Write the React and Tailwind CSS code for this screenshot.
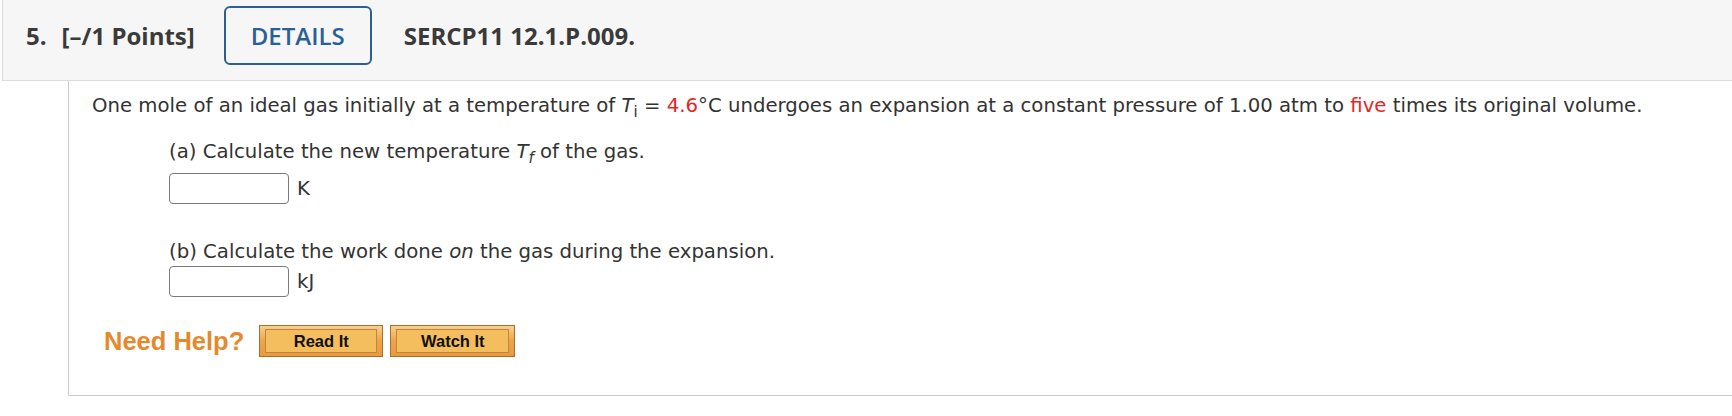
export default function App() {
  const body = { fontFamily: '"DejaVu Sans", Verdana, sans-serif' };

  const HelpButton = ({ label, width }) => (
    <div
      className={`h-[32px] ${width} border border-[#a96f30] bg-gradient-to-b from-[#f8cf8f] via-[#eda348] to-[#e99a3f] px-[5px] py-[3px]`}
    >
      <div className="flex h-full items-center justify-center border border-[#c4843a] bg-[#f4bd5e]">
        <span
          className="text-[16.5px] font-bold text-[#111]"
          style={{ fontFamily: '"Liberation Sans", Arial, sans-serif' }}
        >
          {label}
        </span>
      </div>
    </div>
  );

  return (
    <div className="h-[416px] w-full overflow-hidden bg-white">
      {/* question header */}
      <div
        className="ml-[2px] h-[81px] border-b border-l border-[#dcdcdc] bg-[#f6f6f6] pt-[6px] text-[24px] text-[#3a3a3a]"
        style={{ fontFamily: '"Open Sans", sans-serif' }}
      >
        <div className="flex h-[59px] items-center">
          <span className="ml-[23px] font-bold">5.</span>
          <span className="ml-[15px] font-bold">[–/1 Points]</span>
          <div className="ml-[29px] flex h-[59px] w-[148px] items-center justify-center rounded-md border-2 border-[#2a6096] font-semibold text-[#2a6096]">
            DETAILS
          </div>
          <span className="ml-[32px] font-bold">SERCP11 12.1.P.009.</span>
        </div>
      </div>

      {/* question body */}
      <div
        className="ml-[68px] h-[315px] border-b border-l border-[#cccccc] pt-[13px] text-[19.7px] leading-[24px] text-[#333]"
        style={body}
      >
        <p className="pl-[23px] whitespace-nowrap">
          One mole of an ideal gas initially at a temperature of{" "}
          <i>T</i>
          <sub className="relative top-[5px] text-[15px]">i</sub> ={" "}
          <span className="text-[#e8251f]">4.6</span>°C undergoes an expansion at a
          constant pressure of 1.00 atm to{" "}
          <span className="text-[#e8251f]">five</span> times its original volume.
        </p>

        <div className="mt-[22px] pl-[100px]">
          <p className="whitespace-nowrap">
            (a) Calculate the new temperature <i>T</i>
            <sub className="relative top-[5px] text-[15px] italic">f</sub> of the gas.
          </p>
          <div className="mt-[9px] flex items-center">
            <div className="h-[31px] w-[120px] rounded-[4px] border border-[#7a7a7a] bg-white" />
            <span className="ml-[8px]">K</span>
          </div>

          <p className="mt-[36px] whitespace-nowrap">
            (b) Calculate the work done <i>on</i> the gas during the expansion.
          </p>
          <div className="mt-[2px] flex items-center">
            <div className="h-[31px] w-[120px] rounded-[4px] border border-[#7a7a7a] bg-white" />
            <span className="ml-[8px]">kJ</span>
          </div>
        </div>

        <div className="mt-[28px] ml-[35px] flex items-center">
          <span
            className="text-[25.5px] font-bold text-[#e48a2d]"
            style={{ fontFamily: '"Liberation Sans", Arial, sans-serif' }}
          >
            Need Help?
          </span>
          <div className="ml-[15px] flex gap-[7px]">
            <HelpButton label="Read It" width="w-[124px]" />
            <HelpButton label="Watch It" width="w-[125px]" />
          </div>
        </div>
      </div>
    </div>
  );
}
